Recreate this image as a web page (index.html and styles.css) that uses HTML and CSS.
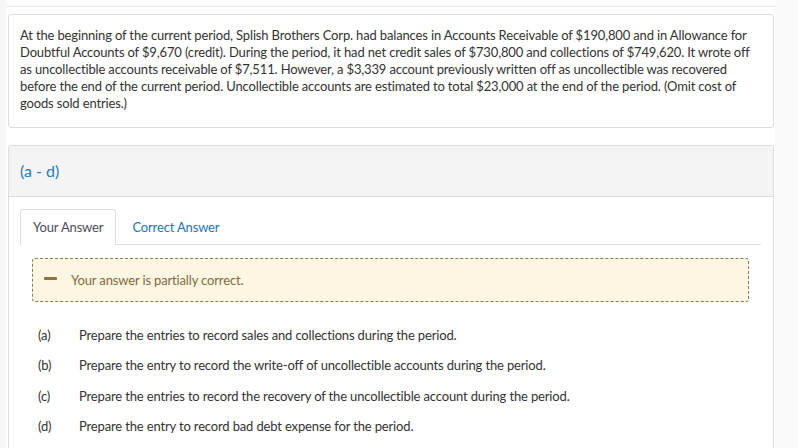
FILE: index.html
```html
<!DOCTYPE html>
<html>
<head>
<meta charset="utf-8">
<link rel="stylesheet" href="styles.css">
</head>
<body>
<div class="page">
  <div class="strip"></div>
  <div class="main">
    <div class="topline"></div>
    <div class="question">
      <p>At the beginning of the current period, Splish Brothers Corp. had balances in Accounts Receivable of $190,800 and in Allowance for Doubtful Accounts of $9,670 (credit). During the period, it had net credit sales of $730,800 and collections of $749,620. It wrote off as uncollectible accounts receivable of $7,511. However, a $3,339 account previously written off as uncollectible was recovered before the end of the current period. Uncollectible accounts are estimated to total $23,000 at the end of the period. (Omit cost of goods sold entries.)</p>
    </div>
    <div class="part">
      <div class="part-head">(a - d)</div>
      <div class="part-body">
        <div class="tabs">
          <div class="tab active">Your Answer</div>
          <div class="tab link">Correct Answer</div>
          <div class="tab-fill"></div>
        </div>
        <div class="feedback">
          <span class="minus"></span>
          <span class="fb-text">Your answer is partially correct.</span>
        </div>
        <div class="steps">
          <div class="step"><span class="lbl">(a)</span><span>Prepare the entries to record sales and collections during the period.</span></div>
          <div class="step"><span class="lbl">(b)</span><span>Prepare the entry to record the write-off of uncollectible accounts during the period.</span></div>
          <div class="step"><span class="lbl">(c)</span><span>Prepare the entries to record the recovery of the uncollectible account during the period.</span></div>
          <div class="step"><span class="lbl">(d)</span><span>Prepare the entry to record bad debt expense for the period.</span></div>
        </div>
      </div>
    </div>
  </div>
  <div class="side"></div>
</div>
</body>
</html>
```

FILE: styles.css
```css
html, body {
  margin: 0;
  padding: 0;
  height: 100%;
  overflow: hidden;
}
body {
  font-family: Lato, "Open Sans", sans-serif;
  color: #333;
  background: #fafafa;
  font-size: 13px;
  letter-spacing: -0.15px;
}
.page {
  display: flex;
  height: 448px;
}
.strip {
  width: 6px;
  background: #f7f7f7;
  flex: none;
}
.main {
  width: 769px;
  flex: none;
  background: #fff;
}
.side {
  flex: 1;
  background: #fafafa;
}
.topline {
  height: 6px;
  border-bottom: 1px solid #eaeaea;
}
.question {
  margin: 7px 1px 0 2px;
  border: 1px solid #ddd;
  border-radius: 3px;
  padding: 12px 11px 15px 11px;
}
.question p {
  margin: 0;
  font-size: 13px;
  line-height: 17px;
  color: #333;
}
.part {
  margin: 17px 1px 0 2px;
  border: 1px solid #ddd;
  border-bottom: none;
  border-radius: 3px 3px 0 0;
  height: 320px;
}
.part-head {
  background: #f4f4f4;
  border-bottom: 1px solid #ddd;
  height: 50px;
  line-height: 50px;
  padding-left: 11px;
  font-size: 16px;
  letter-spacing: 0;
  color: #1f7bb6;
}
.part-body {
  padding: 12px 11px 0 11px;
}
.tabs {
  display: flex;
  align-items: flex-end;
  height: 36px;
}
.tab {
  font-size: 13px;
  height: 36px;
  line-height: 34px;
  box-sizing: border-box;
  white-space: nowrap;
}
.tab.active {
  border: 1px solid #ddd;
  border-bottom: none;
  border-radius: 3px 3px 0 0;
  color: #4b4b5e;
  padding: 0 12px;
}
.tab.link {
  color: #2176b3;
  border-bottom: 1px solid #ddd;
  padding: 1px 16px 0 16px;
}
.tab-fill {
  flex: 1;
  height: 36px;
  box-sizing: border-box;
  border-bottom: 1px solid #ddd;
  margin-right: 1px;
}
.feedback {
  margin: 13px 13px 0 12px;
  background: #fdf6e3;
  border: 1px dashed #8a7a50;
  border-radius: 3px;
  height: 42px;
  display: flex;
  align-items: center;
  padding-left: 11px;
}
.minus {
  width: 13px;
  height: 3px;
  background: #8b7440;
  border-radius: 1px;
  margin-right: 14px;
  margin-top: -3px;
}
.fb-text {
  font-size: 13px;
  color: #7d6b3e;
}
.steps {
  margin-top: 25px;
  padding-left: 18px;
}
.step {
  display: flex;
  font-size: 13px;
  line-height: 17px;
  margin-bottom: 13.3px;
  color: #333;
}
.step .lbl {
  width: 41px;
  flex: none;
}
```
